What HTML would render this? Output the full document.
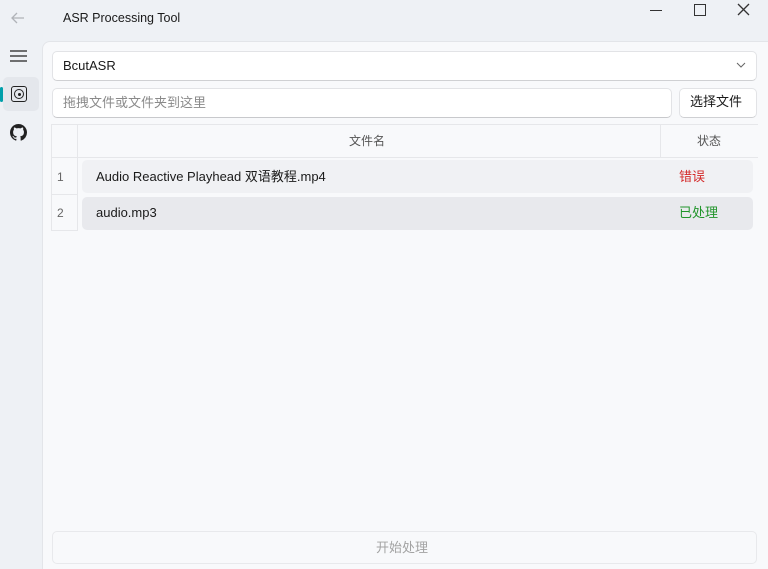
<!DOCTYPE html><html><head><meta charset="utf-8"><style>
*{margin:0;padding:0;box-sizing:border-box}
body{width:768px;height:569px;overflow:hidden;background:#eef1f5;font-family:"Liberation Sans","Noto Sans CJK SC",sans-serif;font-size:13px;color:#1a1a1a;position:relative}
.a{position:absolute;line-height:16px}
.panel{left:42px;top:41px;width:726px;height:528px;background:#f8f9fb;border-left:1px solid #e3e5e9;border-top:1px solid #e3e5e9;border-top-left-radius:8px}
.box{background:#fff;border:1px solid #e2e3e6;border-bottom-color:#cfd0d3;border-radius:5px}
</style></head><body>
<svg class="a" style="left:10px;top:10px" width="16" height="16" viewBox="0 0 16 16"><path d="M14 8H2M7 3L2 8l5 5" stroke="#b0b3b8" stroke-width="1.3" fill="none"/></svg>
<div class="a" style="left:63px;top:10px;font-size:12.5px">ASR Processing Tool</div>
<div class="a" style="left:650px;top:10px;width:12px;height:1px;background:#333"></div>
<div class="a" style="left:694px;top:4px;width:12px;height:12px;border:1.3px solid #333"></div>
<svg class="a" style="left:737px;top:3px" width="13" height="13" viewBox="0 0 13 13"><path d="M1 1l11 11M12 1L1 12" stroke="#333" stroke-width="1.3"/></svg>
<svg class="a" style="left:10px;top:49px" width="17" height="14"><path d="M0 2h17M0 7h17M0 12h17" stroke="#444" stroke-width="1.5"/></svg>
<div class="a" style="left:3px;top:77px;width:36px;height:34px;background:#e4e7ec;border-radius:5px"></div>
<div class="a" style="left:0;top:87px;width:3px;height:15px;background:#009faa;border-radius:2px"></div>
<div class="a" style="left:11px;top:86px;width:16px;height:16px;border:1.5px solid #222;border-radius:3px"></div>
<div class="a" style="left:14px;top:89px;width:10px;height:10px;border:1.5px solid #222;border-radius:50%"></div>
<div class="a" style="left:17.5px;top:92.5px;width:3px;height:3px;background:#222;border-radius:50%"></div>
<svg class="a" style="left:10px;top:124px" width="17" height="17" viewBox="0 0 16 16"><path fill="#222" d="M8 0C3.58 0 0 3.58 0 8c0 3.540 2.29 6.53 5.47 7.59.4.07.55-.17.55-.38v-1.33c-2.230.48-2.7-1.07-2.7-1.07-.36-.92-.89-1.17-.89-1.17-.73-.5.06-.49.06-.49.8.06 1.23.83 1.23.83.71 1.22 1.870.87 2.330.66.07-.52.28-.87.51-1.07-1.78-.2-3.64-.89-3.64-3.950 0-.87.31-1.59.82-2.15-.08-.2-.36-1.02.08-2.12 0 0 .67-.21 2.2.82a7.6 7.600 0 0 1 4 0c1.53-1.04 2.2-.82 2.2-.82.44 1.1.16 1.92.08 2.12.51.56.82 1.27.82 2.15 0 3.07-1.87 3.75-3.65 3.95.29.25.54.73.54 1.48v2.2c0 .21.15.46.55.38A8.01 8.01 0 0 0 16 8c0-4.42-3.58-8-8-8z"/></svg>
<div class="a panel"></div>
<div class="a box" style="left:52px;top:51px;width:705px;height:30px"></div>
<div class="a" style="left:63px;top:58px">BcutASR</div>
<svg class="a" style="left:736px;top:62px" width="10" height="6"><path d="M1 1l4 4 4-4" stroke="#666" fill="none"/></svg>
<div class="a box" style="left:52px;top:88px;width:620px;height:30px;border-bottom:1.5px solid #c8c9cc"></div>
<div class="a" style="left:63px;top:95px;color:#8a8a8a">拖拽文件或文件夹到这里</div>
<div class="a box" style="left:679px;top:88px;width:78px;height:30px"></div>
<div class="a" style="left:690px;top:94px">选择文件</div>
<div class="a" style="left:51px;top:124px;width:707px;height:1px;background:#e6e7ea"></div>
<div class="a" style="left:51px;top:157px;width:707px;height:1px;background:#e6e7ea"></div>
<div class="a" style="left:51px;top:124px;width:1px;height:107px;background:#e6e7ea"></div>
<div class="a" style="left:77px;top:124px;width:1px;height:107px;background:#e6e7ea"></div>
<div class="a" style="left:660px;top:124px;width:1px;height:33px;background:#e6e7ea"></div>
<div class="a" style="left:51px;top:194px;width:27px;height:1px;background:#e6e7ea"></div>
<div class="a" style="left:51px;top:230px;width:27px;height:1px;background:#e6e7ea"></div>
<div class="a" style="left:349px;top:133px;color:#555;font-size:12px">文件名</div>
<div class="a" style="left:697px;top:133px;color:#555;font-size:12px">状态</div>
<div class="a" style="left:82px;top:160px;width:671px;height:33px;background:#f0f1f4;border-radius:5px"></div>
<div class="a" style="left:82px;top:197px;width:671px;height:33px;background:#e8e9ed;border-radius:5px"></div>
<div class="a" style="left:57px;top:169px;color:#666;font-size:12px">1</div>
<div class="a" style="left:57px;top:205px;color:#666;font-size:12px">2</div>
<div class="a" style="left:96px;top:169px">Audio Reactive Playhead 双语教程.mp4</div>
<div class="a" style="left:96px;top:205px">audio.mp3</div>
<div class="a" style="left:679px;top:169px;color:#d42a2a">错误</div>
<div class="a" style="left:679px;top:205px;color:#21952b">已处理</div>
<div class="a" style="left:52px;top:531px;width:705px;height:33px;border:1px solid #e8e9ec;border-radius:5px;background:#f8f9fb"></div>
<div class="a" style="left:376px;top:540px;color:#a3a3a3">开始处理</div>
</body></html>
